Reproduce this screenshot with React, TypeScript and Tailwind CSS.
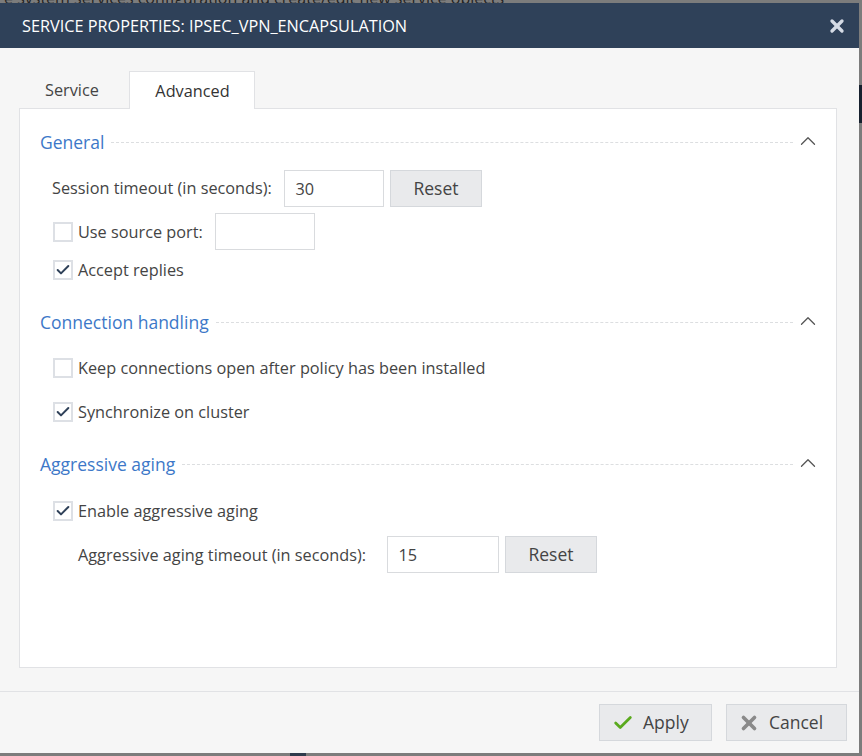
import { Check, ChevronUp, X } from "lucide-react";

const Checkbox = ({ checked }: { checked?: boolean }) => (
  <span className="flex h-5 w-5 shrink-0 items-center justify-center border-2 border-[#dde0e5] bg-white">
    {checked && <Check size={16} strokeWidth={3} className="text-[#2f4159]" />}
  </span>
);

const TextBox = ({ value, width }: { value?: string; width: string }) => (
  <div className={`flex h-[37px] items-center border border-[#d9dbde] bg-white px-[10.5px] pt-px text-[#444] ${width}`}>
    {value}
  </div>
);

const ResetButton = () => (
  <button className="h-[37px] w-[92px] border border-[#d5d8dc] bg-[#e9eaec] text-center text-[17.5px] text-[#444]">
    Reset
  </button>
);

const SectionHead = ({ title, className }: { title: string; className: string }) => (
  <div className={`flex h-6 items-center pl-[20px] pr-[15px] ${className}`}>
    <span className="text-[17.5px] text-[#3d78c8]">{title}</span>
    <span className="ml-[7px] mr-[2px] flex-1 border-t border-dashed border-[#dcdee0]" />
    <ChevronUp size={26} strokeWidth={1.2} className="-mb-1 -mt-[6px] text-[#555]" />
  </div>
);

const CheckRow = ({ label, checked, className }: { label: string; checked?: boolean; className: string }) => (
  <div className={`flex h-5 items-center gap-[5px] pl-[33px] ${className}`}>
    <Checkbox checked={checked} />
    <span>{label}</span>
  </div>
);

export default function App() {
  return (
    <div className="flex h-[756px] w-[862px] flex-col overflow-hidden bg-[#7c7c7c] font-['Open_Sans',sans-serif] text-[16.27px] text-[#444]">
      <div className="h-[3px] overflow-hidden whitespace-nowrap pl-[4px] text-[16px] text-[#222]">
        <div className="-mt-[14px]">e system services configuration and create/edit new service objects</div>
      </div>
      <div className="flex min-h-0 flex-1">
        <div className="flex w-[859px] flex-col bg-[#f6f6f6]">
          <div className="flex h-[45px] shrink-0 items-center justify-between bg-[#2f4159] pl-[22px] pr-[12px] text-white">
            <span className="pt-px">SERVICE PROPERTIES: IPSEC_VPN_ENCAPSULATION</span>
            <X size={20} strokeWidth={4} className="text-[#d5dbe5]" />
          </div>
          <div className="flex h-[60px] shrink-0 items-end pl-[19px]">
            <div className="flex h-[37px] w-[110px] items-center pl-[26px] pt-px text-[#444]">Service</div>
            <div className="relative top-px flex h-[38px] w-[126px] items-center justify-center border border-b-0 border-[#e1e2e5] bg-white pl-px pt-px text-[#333]">
              Advanced
            </div>
          </div>
          <div className="ml-[19px] h-[560px] w-[818px] shrink-0 border border-[#e1e2e5] bg-white">
            <SectionHead title="General" className="mt-[21px]" />
            <div className="mt-[16px] flex items-center pl-[32px]">
              <span className="w-[232px]">Session timeout (in seconds):</span>
              <TextBox value="30" width="w-[100px]" />
              <span className="w-[6px]" />
              <ResetButton />
            </div>
            <div className="mt-[6px] flex h-[37px] items-center gap-[5px] pl-[33px]">
              <Checkbox />
              <span className="w-[132px] pt-px">Use source port:</span>
              <TextBox width="w-[100px]" />
            </div>
            <CheckRow label="Accept replies" checked className="mt-[10px]" />
            <SectionHead title="Connection handling" className="mt-[30px]" />
            <CheckRow label="Keep connections open after policy has been installed" className="mt-[24px]" />
            <CheckRow label="Synchronize on cluster" checked className="mt-[24px]" />
            <SectionHead title="Aggressive aging" className="mt-[30px]" />
            <CheckRow label="Enable aggressive aging" checked className="mt-[25px]" />
            <div className="mt-[15px] flex items-center pl-[58px]">
              <span className="w-[309px] pt-px">Aggressive aging timeout (in seconds):</span>
              <TextBox value="15" width="w-[112px]" />
              <span className="w-[6px]" />
              <ResetButton />
            </div>
          </div>
          <div className="mt-[23px] flex flex-1 items-start justify-end gap-[14px] border-t border-[#e1e2e5] pr-[12px] pt-[12px] text-[17.5px]">
            <button className="flex h-[37px] w-[113px] items-center gap-[9px] border border-[#d5d8dc] bg-[#e9eaec] pl-[12px]">
              <Check size={22} strokeWidth={3} className="text-[#5aaa1e]" />
              <span>Apply</span>
            </button>
            <button className="flex h-[37px] w-[121px] items-center gap-[9px] border border-[#d5d8dc] bg-[#e9eaec] pl-[11px]">
              <X size={22} strokeWidth={4} className="text-[#8a8a8a]" />
              <span>Cancel</span>
            </button>
          </div>
        </div>
        <div className="flex w-[3px] flex-col">
          <div className="mt-[82px] h-[38px] bg-[#16202e]" />
        </div>
      </div>
      <div className="flex h-[3px] shrink-0 overflow-hidden whitespace-nowrap text-[14px] leading-[20px] text-[#222]">
        <span className="w-[290px]">III</span>
        <span className="h-[3px] w-[16px] bg-[#2f3b4c]" />
        <span className="ml-[12px] w-[97px]">ILE</span>
        <span className="w-[125px]">0</span>
        <span className="w-[180px]">ENA</span>
        <span>2020</span>
      </div>
    </div>
  );
}
